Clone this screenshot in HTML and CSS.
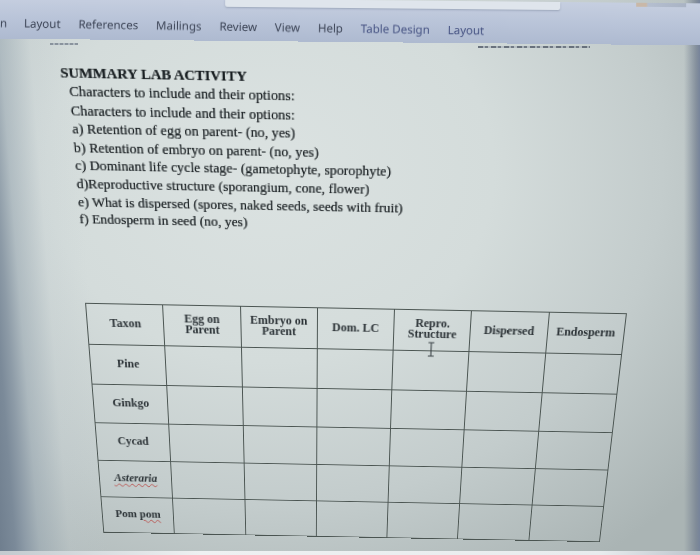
FILE: index.html
```html
<!DOCTYPE html>
<html lang="en">
<head>
<meta charset="utf-8">
<title>Summary Lab Activity</title>
<link rel="stylesheet" href="styles.css">
</head>
<body>
<div class="screen">
  <div class="ribbon">
    <div class="titlebar"><div class="search"></div><div class="user"></div></div>
    <nav class="tabs">
      <span class="tab cut">n</span>
      <span class="tab">Layout</span>
      <span class="tab">References</span>
      <span class="tab">Mailings</span>
      <span class="tab">Review</span>
      <span class="tab">View</span>
      <span class="tab">Help</span>
      <span class="tab ctx">Table Design</span>
      <span class="tab ctx">Layout</span>
    </nav>
  </div>
  <div class="marks"><span class="mark-left"></span><span class="mark-right"></span></div>
  <div class="sheet">
    <div class="doc">
      <p class="title">SUMMARY LAB ACTIVITY</p>
      <p>Characters to include and their options:</p>
      <p>Characters to include and their options:</p>
      <p>a) Retention of egg on parent- (no, yes)</p>
      <p>b) Retention of embryo on parent- (no, yes)</p>
      <p>c) Dominant life cycle stage- (gametophyte, sporophyte)</p>
      <p>d)Reproductive structure (sporangium, cone, flower)</p>
      <p>e) What is dispersed (spores, naked seeds, seeds with fruit)</p>
      <p>f) Endosperm in seed (no, yes)</p>
    </div>
    <table class="grid">
      <tr class="head">
        <th>Taxon</th>
        <th class="two">Egg on<br>Parent</th>
        <th class="two">Embryo on<br>Parent</th>
        <th>Dom. LC</th>
        <th class="two cursor-cell">Repro.<br>Structure<svg class="ibeam" viewBox="0 0 8 16" width="8" height="16"><path d="M1 1h6M4 1v14M1 15h6" fill="none" stroke="#3a4246" stroke-width="1.1"/></svg></th>
        <th>Dispersed</th>
        <th>Endosperm</th>
      </tr>
      <tr><td class="label">Pine</td><td></td><td></td><td></td><td></td><td></td><td></td></tr>
      <tr><td class="label">Ginkgo</td><td></td><td></td><td></td><td></td><td></td><td></td></tr>
      <tr><td class="label">Cycad</td><td></td><td></td><td></td><td></td><td></td><td></td></tr>
      <tr><td class="label"><span class="spell italic">Asteraria</span></td><td></td><td></td><td></td><td></td><td></td><td></td></tr>
      <tr><td class="label">Pom <span class="spell">pom</span></td><td></td><td></td><td></td><td></td><td></td><td></td></tr>
    </table>
  </div>
  <div class="edge"></div>
</div>
</body>
</html>
```
FILE: styles.css
```css
* { box-sizing: border-box; }
html, body { margin: 0; padding: 0; }
body {
  width: 700px;
  height: 555px;
  overflow: hidden;
  background: #c9d3d3;
  font-family: "Liberation Serif", "Times New Roman", serif;
}
.screen {
  width: 700px;
  height: 555px;
  display: flex;
  flex-direction: column;
  overflow: hidden;
  background:
    linear-gradient(85.5deg, #6f7e8e 0, #7b8a99 16px, #8d9ba7 26px, rgba(150,165,176,0.55) 40px, rgba(190,200,205,0.2) 70px, rgba(255,255,255,0) 110px),
    linear-gradient(to right, rgba(0,0,0,0) 0, rgba(0,0,0,0) 684px, rgba(110,122,140,0.7) 696px, #76839a 700px),
    radial-gradient(ellipse 560px 480px at 270px 170px, #dbe2e1 0, #d4dcdb 40%, #c3cccc 70%, #aab4b4 100%),
    #a4aeae;
}

/* ribbon */
.ribbon {
  flex: none;
  height: 42px;
  margin: 0 -12px;
  padding: 0 12px;
  position: relative;
  z-index: 1;
  background: linear-gradient(to bottom, #c6cfe0 0, #b8c3d8 55%, #aebad0 100%);
  transform-origin: 362px 21px;
  transform: rotate(0.55deg);
}
.titlebar {
  height: 9px;
  display: flex;
}
.search {
  margin-left: 225px;
  width: 335px;
  height: 8px;
  background: #dfe5ec;
  border-radius: 0 0 2px 2px;
  box-shadow: 0 1px 2px rgba(90,100,120,0.35);
}
.user {
  margin-left: 76px;
  width: 50px;
  height: 4px;
  background: linear-gradient(to right, #c9b8a8 0, #c9b8a8 10px, #b5bfd0 12px, #a9b3c4 50px);
}
.tabs {
  display: flex;
  gap: 17.9px;
  margin-top: 11px;
  font-family: "Noto Sans", "Open Sans", sans-serif;
  font-size: 11.5px;
  line-height: 16px;
  color: #3d4557;
  white-space: nowrap;
  transform-origin: 250px 8px;
  transform: rotate(0.35deg);
}
.tab.cut { margin-left: 0; margin-right: -1px; }
.tab.ctx { color: #465383; }

.marks {
  flex: none;
  height: 8px;
  display: flex;
  align-items: flex-start;
}
.mark-left {
  margin-left: 50px;
  margin-top: 1px;
  width: 28px;
  height: 2px;
  background: repeating-linear-gradient(to right, #7d8793 0 3px, #aab3bc 3px 5px);
  opacity: 0.85;
}
.mark-right {
  margin-left: 400px;
  margin-top: 4px;
  width: 112px;
  height: 2px;
  background: repeating-linear-gradient(to right, #4f5866 0 5px, #9ea7b0 5px 7px, #5a6371 7px 10px, #b0b8bf 10px 13px);
  opacity: 0.8;
}

/* document sheet, tilted like the photo */
.sheet {
  flex: none;
  height: 500px;
  transform-origin: 356px 258px;
  transform: perspective(400px) rotate(1.1deg) rotateX(-8.3deg);
}
.doc {
  padding: 35.5px 0 0 86px;
  color: #1b2124;
  font-size: 13.3px;
  line-height: 16.6px;
  text-shadow: 0 0 0.6px rgba(20,25,28,0.6);
}
.doc p { margin: 0; white-space: nowrap; }
.doc .title {
  margin-left: -7px;
  font-size: 13.5px;
  font-weight: bold;
  color: #181e21;
}

.grid {
  margin: 73px 0 0 85px;
  width: 542px;
  border-collapse: collapse;
  table-layout: fixed;
  color: #2b3236;
  font-size: 12px;
  font-weight: bold;
}
.grid tr { height: 42px; }
.grid th, .grid td {
  border: 1.4px solid #4a5451;
  padding: 0 0 2px 0;
  text-align: center;
  vertical-align: middle;
  font-weight: bold;
}
.grid th.two { line-height: 11px; }
.cursor-cell { position: relative; }
.ibeam {
  position: absolute;
  left: 34px;
  bottom: -7px;
}
.label { font-size: 12px; }
.spell {
  text-decoration: underline wavy #b8504c;
  text-decoration-thickness: 1px;
  text-underline-offset: 2px;
}
.italic { font-style: italic; }

.edge {
  flex: none;
  height: 4px;
  margin-top: auto;
  background: linear-gradient(to right, #c3cacf, #eef1f2 200px, #e8ecee 600px, #bcc4cc);
}
```
